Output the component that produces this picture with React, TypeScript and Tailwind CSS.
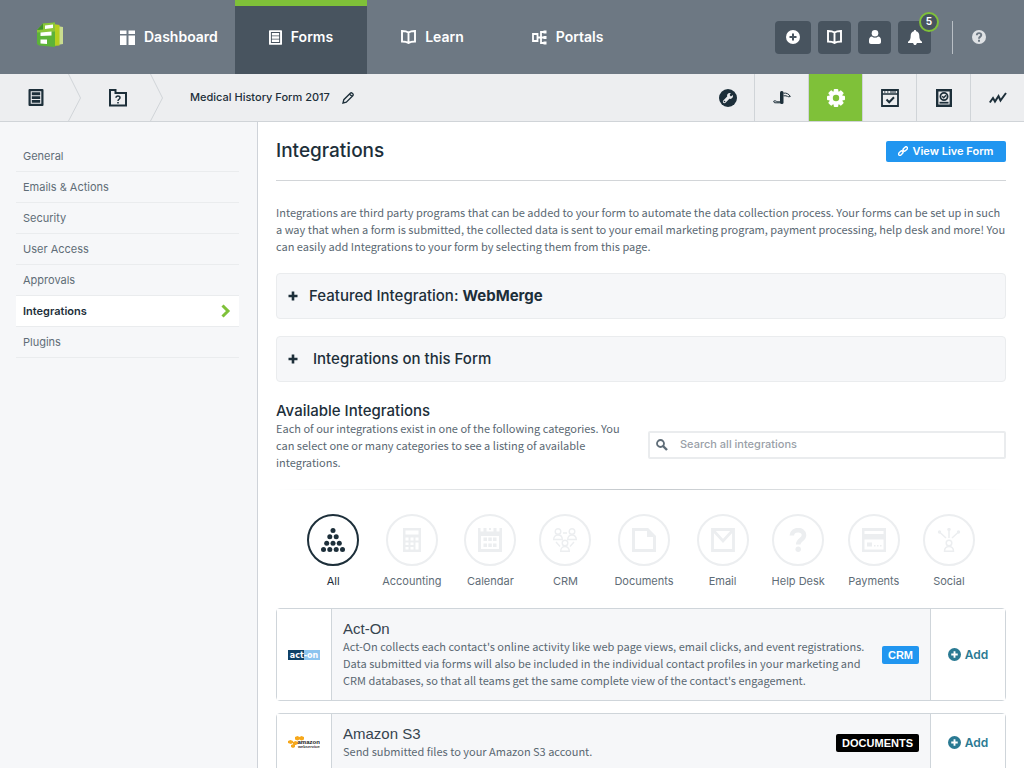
import React from 'react';
import { clsx } from 'clsx';

interface IconProps {
    className?: string;
}

/* ---------- Logos ---------- */

const BrandLogo: React.FC = () => (
    <svg width="28" height="26" viewBox="0 0 28 26" aria-hidden="true">
        <path d="M21 4l6 1v17l-6 1z" fill="#c9dc8f" />
        <path d="M17 2l6.500 1v20.500l-6.500.5z" fill="#b5cf1e" />
        <path d="M1 8l6-6.500L19 .5v24.500l-16-1.500L1 22z" fill="#5cb338" />
        <path d="M7 1.500L19 .5v9l-18 1V8z" fill="#8cc63a" />
        <path d="M1 8l6-6.500v6z" fill="#3f8f2c" />
        <path d="M9 3.500l8-1v3.500l-8 1zM4.500 10.500l11-1v4l-11 .5zM4.500 17.500l6.500 0v4.500l-6.500-.5z" fill="#fff" />
    </svg>
);

const ActOnLogo: React.FC = () => (
    <svg width="32" height="10" viewBox="0 0 32 10" role="img" aria-label="Act-On">
        <path d="M0 0h16v10H0z" fill="#0f4166" />
        <path d="M16 0h16v10H16z" fill="#8cc4ef" />
        <text x="16" y="7.500" fill="#fff" fontSize="8" fontWeight="bold" fontFamily="DejaVu Sans, sans-serif" textAnchor="middle">
            act-on
        </text>
    </svg>
);

const AmazonLogo: React.FC = () => (
    <svg width="32" height="13" viewBox="0 0 32 13" role="img" aria-label="Amazon Web Services">
        <path
            d="M7 1l2.500-1 2 1 2-1 2.500 1v2.500l-2.500 1-2-1-2 1-2.500-1zM0 5l2.500-1L5 5v2l-2 1-3-1zM5 6l2.500-1L10 6v2l-2.500 1L5 8zM3 9l2.500-1L7 9v2l-2 1-2-1z"
            fill="#f6a81c"
        />
        <text x="9.500" y="8" fill="#222" fontSize="6" fontWeight="bold" fontFamily="Liberation Sans, sans-serif">
            amazon
        </text>
        <text x="10" y="12" fill="#333" fontSize="4" fontWeight="bold" fontFamily="Liberation Sans, sans-serif">
            webservices
        </text>
    </svg>
);

/* ---------- Icons ---------- */

const DashboardIcon: React.FC = () => (
    <svg width="15" height="15" viewBox="0 0 15 15" fill="currentColor" aria-hidden="true">
        <path d="M0 .5h6.500v3.500H0zM8.500 .5H15v3.500H8.500zM0 5.500h6.500V15H0zM8.500 5.500H15V15H8.500z" />
    </svg>
);

const FormIcon: React.FC<IconProps> = ({ className }) => (
    <svg className={className} viewBox="0 0 15 17" fill="currentColor" aria-hidden="true">
        <path
            fillRule="evenodd"
            d="M1 0h13a1 1 0 0 1 1 1v15a1 1 0 0 1-1 1H1a1 1 0 0 1-1-1V1a1 1 0 0 1 1-1zM2.200 2.200v12.600h10.600V2.200z"
        />
        <path d="M3.300 3.300h8.400v2.900H3.300zM3.300 7.200h8.400v2.700H3.300zM3.300 10.900h8.400v2.800H3.300z" />
    </svg>
);

const BookIcon: React.FC = () => (
    <svg width="15" height="14" viewBox="0 0 15 14" fill="none" stroke="currentColor" strokeWidth="1.900" aria-hidden="true">
        <path d="M7.500 2.500C6 1.500 3.500 1 1 1v10.500c2.500 0 5 .5 6.500 1.500 1.500-1 4-1.500 6.500-1.500V1c-2.500 0-5 .5-6.500 1.500zV13" />
    </svg>
);

const PortalsIcon: React.FC = () => (
    <svg width="15" height="15" viewBox="0 0 15 15" fill="none" stroke="currentColor" aria-hidden="true">
        <path d="M1 4h4.500v7H1z" strokeWidth="1.800" />
        <path d="M6 7.500h8M14 2H9v11h5" strokeWidth="1.800" />
        <path d="M11.500 .5H14.500v3h-3zM11.500 6H14.500v3h-3zM11.500 11.500H14.500v3h-3z" fill="currentColor" stroke="none" />
    </svg>
);

const PlusCircleIcon: React.FC<{ className?: string; plus: string }> = ({ className, plus }) => (
    <svg className={className} viewBox="0 0 14 14" aria-hidden="true">
        <circle cx="7" cy="7" r="7" fill="currentColor" />
        <path d="M7 3.500v7M3.500 7h7" stroke={plus} strokeWidth="2" />
    </svg>
);

const UserIcon: React.FC = () => (
    <svg width="12" height="14" viewBox="0 0 12 14" fill="currentColor" aria-hidden="true">
        <circle cx="6" cy="3.300" r="3.300" />
        <path d="M3 6.500c1.500 1.600 4.500 1.600 6 0 2 .2 3 1.500 3 4V12c0 1-.8 2-2 2H2c-1.200 0-2-1-2-2v-1.500c0-2.500 1-3.800 3-4z" />
    </svg>
);

const BellIcon: React.FC = () => (
    <svg width="14" height="15" viewBox="0 0 14 15" fill="currentColor" aria-hidden="true">
        <path d="M7 0c.7 0 1.100.5 1.100 1.200 2 .5 3.200 2 3.200 4.300 0 3.500.8 5 2.700 6.200V13H0v-1.300c1.900-1.200 2.700-2.700 2.700-6.200C2.700 3.200 3.900 1.700 5.900 1.200 5.900.5 6.300 0 7 0zM5.200 13h3.600c-.2 1.500-.9 2-1.800 2s-1.600-.5-1.800-2z" />
    </svg>
);

const HelpIcon: React.FC = () => (
    <svg width="14" height="14" viewBox="0 0 14 14" aria-hidden="true">
        <circle cx="7" cy="7" r="7" fill="#dfe2e5" />
        <path d="M4.800 5.300c0-3 4.500-2.800 4.500-.2C9.300 6.700 7 6.600 7 8.700" fill="none" stroke="#6d7883" strokeWidth="1.900" />
        <path d="M6 9.800h2v1.900H6z" fill="#6d7883" />
    </svg>
);

const FolderIcon: React.FC = () => (
    <svg width="18" height="18" viewBox="0 0 18 18" fill="none" stroke="currentColor" aria-hidden="true">
        <path d="M1 16.500V1h5.500v3H17v12.500z" strokeWidth="2" />
        <path d="M7 8.800c0-2.400 4-2.300 4-.1 0 1.600-2 1.500-2 3.300" strokeWidth="1.500" />
        <path d="M8.200 13h1.600v1.500H8.200z" fill="currentColor" stroke="none" />
    </svg>
);

const PencilIcon: React.FC = () => (
    <svg width="12" height="12" viewBox="0 0 12 12" fill="none" stroke="currentColor" strokeWidth="1.300" aria-hidden="true">
        <path d="M1 11l.8-3.300L8.300 1.200c.6-.6 1.300-.6 1.900 0l.6.6c.6.600.6 1.300 0 1.900L4.300 10.200zM7.500 2l2.500 2.500" />
    </svg>
);

const Chevron: React.FC = () => (
    <svg width="13" height="47" viewBox="0 0 13 47" fill="none" stroke="#d0d4d8" aria-hidden="true">
        <path d="M.5 0l12 24-12 23" />
    </svg>
);

const WrenchIcon: React.FC = () => (
    <svg width="18" height="18" viewBox="0 0 18 18" aria-hidden="true">
        <circle cx="9" cy="9" r="9" fill="currentColor" />
        <path
            d="M13.900 6.100l-2 1.300-1.300-1.300 1.200-2c-2.400-.6-4.300 1.300-3.600 3.500L4.300 11.500c-1.400 1.500.7 3.600 2.200 2.200l3.900-3.900c2.200.7 4.100-1.300 3.500-3.700z"
            fill="#edeef0"
        />
        <circle cx="5.500" cy="12.500" r=".8" fill="#1d2f3a" />
    </svg>
);

const KnifeIcon: React.FC = () => (
    <svg width="18" height="15" viewBox="0 0 18 15" fill="none" stroke="currentColor" aria-hidden="true">
        <rect x="7" y="1" width="3.500" height="13" rx="1.500" fill="currentColor" stroke="none" />
        <path d="M10.500 3.200c3-.6 5.500.8 6.800 3.300-2.300.9-3.300-.6-3.300-.6M10.500 5.800H13l1 .5M7 12.800H3c-2 .2-2.500-.8-2.200-1.800 2-.7 3.200.8 3.200.8H7" strokeWidth="1" />
    </svg>
);

const GearIcon: React.FC = () => (
    <svg width="18" height="18" viewBox="0 0 18 18" aria-hidden="true">
        <g fill="currentColor">
            <circle cx="9" cy="9" r="7" />
            <rect x="6.700" width="4.600" height="18" rx="1" />
            <rect x="6.700" width="4.600" height="18" rx="1" transform="rotate(45 9 9)" />
            <rect x="6.700" width="4.600" height="18" rx="1" transform="rotate(90 9 9)" />
            <rect x="6.700" width="4.600" height="18" rx="1" transform="rotate(135 9 9)" />
        </g>
        <circle cx="9" cy="9" r="3.200" fill="#7fc139" />
    </svg>
);

const WindowCheckIcon: React.FC = () => (
    <svg width="18" height="18" viewBox="0 0 18 18" fill="none" stroke="currentColor" aria-hidden="true">
        <path d="M1 1h16v16H1z" strokeWidth="1.800" />
        <path d="M1 5h16" strokeWidth="1.500" />
        <path d="M3 3h1.500M6 3h1.500M9 3h6" strokeWidth="1" />
        <path d="M5.500 10.500l2.700 2.700 4.800-5" strokeWidth="2" />
    </svg>
);

const CertificateIcon: React.FC = () => (
    <svg width="16" height="18" viewBox="0 0 16 18" fill="none" stroke="currentColor" aria-hidden="true">
        <path d="M1.200 1.200h13.600v15.600H1.200z" strokeWidth="2.400" />
        <circle cx="8" cy="7.500" r="3.600" strokeWidth="1.800" />
        <path d="M6.200 7.300l1.500 1.500 2.300-2.600" strokeWidth="1.400" />
        <path d="M3.500 13.700h9" strokeWidth="1.800" />
    </svg>
);

const TrendIcon: React.FC = () => (
    <svg width="18" height="12" viewBox="0 0 18 12" fill="none" stroke="currentColor" strokeWidth="2" aria-hidden="true">
        <path d="M.8 10.500L4 6l2 3.500L9.500 4l2 4.500L17 1" />
    </svg>
);

const LinkIcon: React.FC = () => (
    <svg width="10" height="10" viewBox="0 0 10 10" fill="none" stroke="currentColor" strokeWidth="1.400" aria-hidden="true">
        <rect x="4.600" y="1.600" width="5.200" height="2.800" rx="1.400" transform="rotate(-45 7.200 3)" />
        <rect x=".2" y="5.800" width="5.200" height="2.800" rx="1.400" transform="rotate(-45 2.800 7.200)" />
        <path d="M3.800 6.200l2.400-2.400" />
    </svg>
);

const SearchIcon: React.FC = () => (
    <svg width="12" height="12" viewBox="0 0 12 12" fill="none" stroke="#5f6d78" aria-hidden="true">
        <circle cx="4.500" cy="4.500" r="3.500" strokeWidth="1.800" />
        <path d="M7 7l4 4" strokeWidth="2.400" />
    </svg>
);

const PlusIcon: React.FC = () => (
    <svg width="10" height="10" viewBox="0 0 10 10" stroke="currentColor" strokeWidth="2.600" aria-hidden="true">
        <path d="M5 .5v9M.5 5h9" />
    </svg>
);

/* ---------- Category drawings, all on a 24px grid ---------- */

const AllDrawing = (
    <g fill="currentColor">
        {[
            [12, 2.5],
            [8.8, 8.8], [15.2, 8.8],
            [5.7, 15.2], [12, 15.2], [18.3, 15.2],
            [2.5, 21.5], [8.8, 21.5], [15.2, 21.5], [21.5, 21.5]
        ].map(([cx, cy]) => (
            <circle key={`${cx}-${cy}`} cx={cx} cy={cy} r="2.500" />
        ))}
    </g>
);

const AccountingDrawing = (
    <g>
        <path d="M3 0h18v24H3z" fill="currentColor" />
        <path
            d="M5.500 2.500h13v4h-13zM5.500 9.500h3v3h-3zM10.500 9.500h3v3h-3zM15.500 9.500h3v3h-3zM5.500 14.500h3v2.500h-3zM10.500 14.500h3v2.500h-3zM15.500 14.500h3v7h-3zM5.500 19h3v2.500h-3zM10.500 19h3v2.500h-3z"
            fill="#fff"
        />
    </g>
);

const CalendarDrawing = (
    <g>
        <path d="M0 0h2.500v3.500h3V0h3v3.500h7V0h3v3.500h3V0H24v24H0z" fill="currentColor" />
        <path d="M3 8h18v13H3z" fill="#fff" />
        <path d="M5.500 9.500H9V13H5.500zM10.300 9.500h3.500V13h-3.500zM15 9.500h3.500V13H15zM5.500 15.500H9V19H5.500zM10.300 15.500h3.500V19h-3.500zM15 15.500h3.500V19H15zM11 0h2v2h-2z" fill="currentColor" />
    </g>
);

const CrmDrawing = (
    <g fill="none" stroke="currentColor" strokeWidth="1.400">
        <circle cx="5" cy="3.500" r="2.800" />
        <path d="M.7 11.500c0-6 8.600-6 8.600 0z" />
        <circle cx="19" cy="3.500" r="2.800" />
        <path d="M14.700 11.500c0-6 8.600-6 8.600 0z" />
        <circle cx="12" cy="15" r="2.800" />
        <path d="M7.700 23.300c0-6.500 8.600-6.500 8.600 0z" />
        <path d="M10 5h4M3 14l4 4.500M21 14l-4 4.500" />
    </g>
);

const DocumentDrawing = (
    <g fill="none" stroke="currentColor" strokeWidth="3">
        <path d="M1.500 1.500h14l7 7v14h-21z" />
        <path d="M15 0l9 9h-9z" fill="currentColor" stroke="none" />
    </g>
);

const EmailDrawing = (
    <g fill="none" stroke="currentColor" strokeWidth="2.800">
        <path d="M1.500 1.500h21v21h-21z" />
        <path d="M2 2l10 11L22 2" />
    </g>
);

const HelpDeskDrawing = (
    <g>
        <path d="M5.800 7.500C6 .5 18 .3 18 7c0 4.800-5.800 4.800-5.800 9.500" fill="none" stroke="currentColor" strokeWidth="4.600" />
        <circle cx="12.200" cy="21.300" r="2.700" fill="currentColor" />
    </g>
);

const PaymentsDrawing = (
    <g>
        <path d="M0 0h24v24H0z" fill="currentColor" />
        <path d="M2.500 3h19v3h-19zM2.500 11.500h19v10h-19z" fill="#fff" />
        <path d="M5 14.500h5v4H5zM12 17h1.500v1.500H12zM15 17h1.500v1.500H15zM18 17h1.500v1.500H18z" fill="currentColor" />
    </g>
);

const SocialDrawing = (
    <g fill="none" stroke="currentColor" strokeWidth="1.500">
        <path d="M12 10V2M9 10L3 4.500M15 10l6-5.500" />
        <g fill="currentColor" stroke="none">
            <circle cx="12" cy="1.500" r="1.700" />
            <circle cx="2.500" cy="4" r="1.700" />
            <circle cx="21.500" cy="4" r="1.700" />
        </g>
        <circle cx="12" cy="15" r="2.800" />
        <path d="M7.500 23.300c0-6.500 9-6.500 9 0z" />
    </g>
);

/* ---------- Data ---------- */

const sections = ['General', 'Emails & Actions', 'Security', 'User Access', 'Approvals', 'Integrations', 'Plugins'];

const tools = [
    { label: 'Build', icon: <WrenchIcon /> },
    { label: 'Tools', icon: <KnifeIcon /> },
    { label: 'Settings', icon: <GearIcon />, active: true },
    { label: 'Submissions', icon: <WindowCheckIcon /> },
    { label: 'Approvals', icon: <CertificateIcon /> },
    { label: 'Analytics', icon: <TrendIcon /> }
];

const categories = [
    { label: 'All', drawing: AllDrawing, active: true },
    { label: 'Accounting', drawing: AccountingDrawing },
    { label: 'Calendar', drawing: CalendarDrawing },
    { label: 'CRM', drawing: CrmDrawing },
    { label: 'Documents', drawing: DocumentDrawing },
    { label: 'Email', drawing: EmailDrawing },
    { label: 'Help Desk', drawing: HelpDeskDrawing },
    { label: 'Payments', drawing: PaymentsDrawing },
    { label: 'Social', drawing: SocialDrawing }
];

const integrations = [
    {
        name: 'Act-On',
        logo: <ActOnLogo />,
        text: "Act-On collects each contact's online activity like web page views, email clicks, and event registrations. Data submitted via forms will also be included in the individual contact profiles in your marketing and CRM databases, so that all teams get the same complete view of the contact's engagement.",
        tag: 'CRM',
        tagColor: 'bg-[#2196f0]'
    },
    {
        name: 'Amazon S3',
        logo: <AmazonLogo />,
        text: 'Send submitted files to your Amazon S3 account.',
        tag: 'DOCUMENTS',
        tagColor: 'bg-black'
    }
];

/* ---------- Page parts ---------- */

const BodyText: React.FC<{ className?: string; children: React.ReactNode }> = ({ className, children }) => (
    <p className={clsx("font-['Noto_Sans_CJK_SC','Inter',sans-serif] text-[11px] leading-[17px] text-[#5a6872]", className)}>
        {children}
    </p>
);

const NavItem: React.FC<{ label: string; icon: React.ReactNode; className?: string }> = ({ label, icon, className }) => (
    <a href="#" className={clsx('flex items-center gap-[9px] text-sm font-semibold text-white', className)}>
        {icon}
        {label}
    </a>
);

const HeaderButton: React.FC<{ label: string; className?: string; children: React.ReactNode }> = ({ label, className, children }) => (
    <button
        type="button"
        aria-label={label}
        className={clsx('relative flex h-[33px] items-center justify-center rounded bg-[#48545f] text-white', className)}
    >
        {children}
    </button>
);

const Header: React.FC = () => (
    <header className="flex h-[74px] shrink-0 bg-[#6d7883]">
        <a href="#" aria-label="Home" className="flex w-[102px] items-center pb-1 pl-9">
            <BrandLogo />
        </a>
        <nav className="flex">
            <NavItem label="Dashboard" icon={<DashboardIcon />} className="pr-[17px] pl-[18px]" />
            <NavItem
                label="Forms"
                icon={<FormIcon className="h-[15px] w-[13px]" />}
                className="border-t-6 border-[#7fc139] bg-[#48545f] px-[34px] pb-1.5"
            />
            <NavItem label="Learn" icon={<BookIcon />} className="px-[34px]" />
            <NavItem label="Portals" icon={<PortalsIcon />} className="px-[34px]" />
        </nav>
        <div className="ml-auto flex items-center gap-[7px] pr-[38px]">
            <HeaderButton label="Create" className="w-9">
                <PlusCircleIcon className="size-3.5" plus="#48545f" />
            </HeaderButton>
            <HeaderButton label="Resources" className="w-[33px]">
                <BookIcon />
            </HeaderButton>
            <HeaderButton label="Account" className="w-[33px]">
                <UserIcon />
            </HeaderButton>
            <HeaderButton label="Notifications" className="w-[33px]">
                <BellIcon />
                <span className="absolute -top-[9px] -right-2 flex size-5 items-center justify-center rounded-full border-2 border-[#7fc139] bg-[#48545f] text-[10px] font-bold">
                    5
                </span>
            </HeaderButton>
            <span className="ml-3.5 h-[33px] w-px bg-[#b9bfc5]" />
            <button type="button" aria-label="Help" className="ml-3">
                <HelpIcon />
            </button>
        </div>
    </header>
);

const Toolbar: React.FC = () => (
    <div className="flex h-12 shrink-0 items-stretch border-b border-[#d0d4d8] bg-[#edeef0] text-[#1d2f3a]">
        <a href="#" aria-label="All forms" className="flex w-[68px] items-center pl-7">
            <FormIcon className="h-[17px] w-4" />
        </a>
        <Chevron />
        <a href="#" aria-label="Folder" className="flex w-[69px] items-center pl-7">
            <FolderIcon />
        </a>
        <Chevron />
        <div className="flex items-center gap-3 pl-[27px]">
            <span className="text-[11px] font-medium">Medical History Form 2017</span>
            <button type="button" aria-label="Rename form">
                <PencilIcon />
            </button>
        </div>
        <div className="ml-auto flex">
            {tools.map(({ label, icon, active }) => (
                <button
                    key={label}
                    type="button"
                    aria-label={label}
                    className={clsx(
                        'flex w-[54px] items-center justify-center border-l border-[#d0d4d8] first:border-transparent',
                        active && 'bg-[#7fc139] text-white'
                    )}
                >
                    {icon}
                </button>
            ))}
        </div>
    </div>
);

const Sidebar: React.FC = () => (
    <nav className="w-[258px] shrink-0 border-r border-[#cfd3d9] bg-[#f6f7f9] pt-[19px] pr-[18px] pl-4">
        {sections.map((section) => {
            const active = section === 'Integrations';
            return (
                <a
                    key={section}
                    href="#"
                    className={clsx(
                        'flex h-[31px] items-center justify-between border-b border-[#eaecee] pr-2 pl-[7px] text-[11px]',
                        active ? 'bg-white font-semibold text-[#1d2f3a]' : 'text-[#5f6d77]'
                    )}
                >
                    {section}
                    {active && (
                        <svg width="10" height="14" viewBox="0 0 10 14" fill="none" stroke="#7fc139" strokeWidth="3" aria-hidden="true">
                            <path d="M1.500 1.500L7 7l-5.500 5.500" />
                        </svg>
                    )}
                </a>
            );
        })}
    </nav>
);

const Panel: React.FC<{ children: React.ReactNode }> = ({ children }) => (
    <button
        type="button"
        className="flex h-[46px] items-center rounded-sm border border-[#eaecee] bg-[#f6f7f9] px-[11px] text-[15px] font-medium"
    >
        <PlusIcon />
        {children}
    </button>
);

const IntegrationCard: React.FC<(typeof integrations)[number]> = ({ name, logo, text, tag, tagColor }) => (
    <article className="flex rounded-sm border border-[#cfd5da] bg-[#f6f7f9]">
        <div className="flex w-[55px] shrink-0 items-center justify-center border-r border-[#cfd5da] bg-white">{logo}</div>
        <div className="flex flex-1 items-center justify-between gap-3 px-[11px] py-[11px]">
            <div className="flex-1">
                <h3 className="font-['Liberation_Sans',Arial,sans-serif] text-[15px] leading-[18px] text-[#36444f]">{name}</h3>
                <BodyText>{text}</BodyText>
            </div>
            <span
                className={clsx(
                    "rounded-xs px-1.5 font-['Liberation_Sans',Arial,sans-serif] text-[11px] leading-[18px] font-bold text-white",
                    tagColor
                )}
            >
                {tag}
            </span>
        </div>
        <div className="flex w-[75px] shrink-0 items-center justify-center border-l border-[#cfd5da] bg-white">
            <button type="button" className="flex items-center gap-1 text-xs font-semibold text-[#2a7a93]">
                <PlusCircleIcon className="size-[13px]" plus="#fff" />
                Add
            </button>
        </div>
    </article>
);

export default function App() {
    return (
        <div className="flex h-screen flex-col overflow-hidden bg-white font-['Inter','Liberation_Sans',sans-serif] text-[#1d2f3a]">
            <Header />
            <Toolbar />
            <div className="flex min-h-0 flex-1">
                <Sidebar />
                <main className="flex min-w-0 flex-1 flex-col px-[18px]">
                    <div className="flex h-[59px] shrink-0 items-center justify-between border-b border-[#d2d5d8]">
                        <h1 className="text-[19px] font-medium">Integrations</h1>
                        <a
                            href="#"
                            className="flex h-[21px] w-[120px] items-center justify-center gap-1 rounded-xs bg-[#2196f0] text-[11px] font-semibold text-white"
                        >
                            <LinkIcon />
                            View Live Form
                        </a>
                    </div>

                    <BodyText className="mt-[23px]">
                        Integrations are third party programs that can be added to your form to automate the data collection process. Your
                        forms can be set up in such a way that when a form is submitted, the collected data is sent to your email marketing
                        program, payment processing, help desk and more! You can easily add Integrations to your form by selecting them from
                        this page.
                    </BodyText>

                    <div className="mt-[18px] flex flex-col gap-[17px]">
                        <Panel>
                            <span className="ml-[11px]">
                                Featured Integration: <strong className="font-bold">WebMerge</strong>
                            </span>
                        </Panel>
                        <Panel>
                            <span className="ml-[15px]">Integrations on this Form</span>
                        </Panel>
                    </div>

                    <div className="mt-5 flex items-center justify-between">
                        <div className="w-[350px]">
                            <h2 className="text-[15px] leading-[18px] font-medium">Available Integrations</h2>
                            <BodyText>
                                Each of our integrations exist in one of the following categories. You can select one or many categories to
                                see a listing of available integrations.
                            </BodyText>
                        </div>
                        <label className="mt-4 ml-[22px] flex h-7 flex-1 items-center gap-3 rounded-xs border-2 border-[#eaecee] px-1.5">
                            <SearchIcon />
                            <input
                                type="search"
                                aria-label="Search all integrations"
                                placeholder="Search all integrations"
                                className="min-w-0 flex-1 text-[11px] outline-none placeholder:font-medium placeholder:text-[#9a9fa8]"
                            />
                        </label>
                    </div>

                    <div className="mt-[18px] h-px shrink-0 bg-linear-to-r from-transparent via-[#c3c8cc] to-transparent" />

                    <div className="mt-6 flex justify-center gap-[23px]">
                        {categories.map(({ label, drawing, active }) => (
                            <button
                                key={label}
                                type="button"
                                className={clsx(
                                    'flex min-w-[52px] flex-col items-center gap-[7px] text-[11px] leading-[17px]',
                                    active ? 'text-[#1d2f3a]' : 'text-[#5f6d77]'
                                )}
                            >
                                <span
                                    className={clsx(
                                        'flex size-[52px] items-center justify-center rounded-full border-2',
                                        active ? 'border-[#1d2f3a]' : 'border-[#eceef0] text-[#eceef0]'
                                    )}
                                >
                                    <svg width="24" height="24" viewBox="0 0 24 24" aria-hidden="true">
                                        {drawing}
                                    </svg>
                                </span>
                                {label}
                            </button>
                        ))}
                    </div>

                    <div className="mt-[18px] flex flex-col gap-3">
                        {integrations.map((integration) => (
                            <IntegrationCard key={integration.name} {...integration} />
                        ))}
                    </div>
                </main>
            </div>
        </div>
    );
}
